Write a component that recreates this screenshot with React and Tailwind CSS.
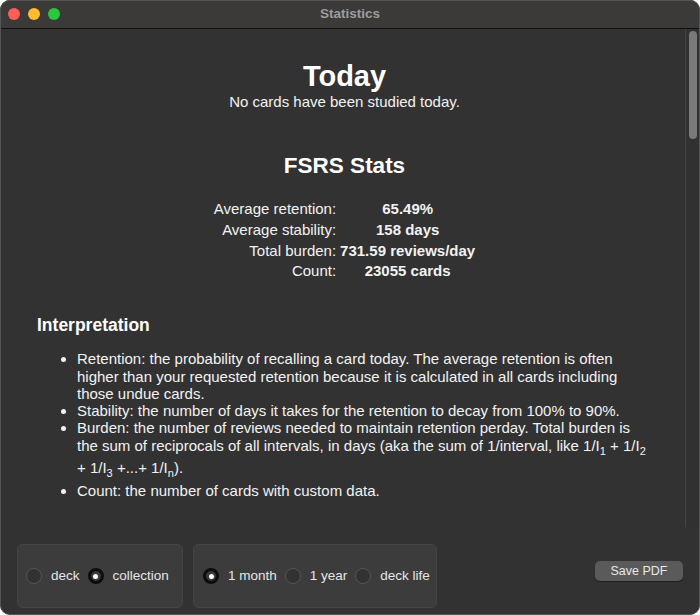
import React from 'react';

const FONT = { fontFamily: '"Liberation Sans", Arial, sans-serif' };

const STATS = [
  ['Average retention:', '65.49%'],
  ['Average stability:', '158 days'],
  ['Total burden:', '731.59 reviews/day'],
  ['Count:', '23055 cards'],
];

const subClass = 'static align-sub leading-normal text-[11px]';

const Radio = ({ label, checked }) => (
  <label className="flex items-center gap-[9px]">
    {checked ? (
      <span className="w-[16px] h-[16px] rounded-full border-[3px] border-[#0c0c0c] bg-[#3a3a3a] flex items-center justify-center">
        <span className="w-[5px] h-[5px] rounded-full bg-white" />
      </span>
    ) : (
      <span className="w-[16px] h-[16px] rounded-full border border-[#555555] bg-[#323232]" />
    )}
    <span className="text-[13.5px] text-[#e6e6e6]">{label}</span>
  </label>
);

const App = () => {
  return (
    <div className="w-[700px] h-[615px] bg-white" style={FONT}>
      <div className="relative w-full h-full rounded-[10px] overflow-hidden bg-[#323232] flex flex-col">
        {/* title bar */}
        <div className="h-[29px] bg-[#3b3a38] border-b border-[#101010] grid grid-cols-[1fr_auto_1fr] items-center shrink-0">
          <div className="flex items-center gap-[8px] pl-[8px]">
            <span className="w-[12px] h-[12px] rounded-full bg-[#ff5f57]" />
            <span className="w-[12px] h-[12px] rounded-full bg-[#febc2e]" />
            <span className="w-[12px] h-[12px] rounded-full bg-[#28c840]" />
          </div>
          <div className="text-[13.5px] font-bold text-[#9e9d9b]">Statistics</div>
          <div />
        </div>

        {/* web view */}
        <div className="h-[498px] flex shrink-0">
          <div className="flex-1 pl-[37px] pr-[33px] pt-[31px] text-[15px] text-[#f2f2f2]">
            <h1 className="text-[29px] font-bold text-center text-white leading-[1.149]">
              Today
            </h1>
            <p className="text-center leading-[1.149]">
              No cards have been studied today.
            </p>

            <h2 className="mt-[42px] text-[22.5px] font-bold text-center text-white leading-[1.149]">
              FSRS Stats
            </h2>
            <table className="mx-auto mt-[20px]">
              <tbody>
                {STATS.map(([label, value]) => (
                  <tr key={label}>
                    <td className="px-[2px] py-[1.75px] text-right leading-[1.149]">
                      {label}
                    </td>
                    <td className="px-[2px] py-[1.75px] text-center font-bold leading-[1.149]">
                      {value}
                    </td>
                  </tr>
                ))}
              </tbody>
            </table>

            <h3 className="mt-[34px] text-[17.5px] font-bold text-white leading-[1.149]">
              Interpretation
            </h3>
            <ul className="mt-[15px] pl-[40px] list-disc leading-[1.149]">
              <li>
                Retention: the probability of recalling a card today. The
                average retention is often higher than your requested retention
                because it is calculated in all cards including those undue
                cards.
              </li>
              <li>
                Stability: the number of days it takes for the retention to
                decay from 100% to 90%.
              </li>
              <li>
                <span>
                  Burden: the number of reviews needed to maintain retention
                  perday. Total burden is
                </span>{' '}
                <span>the sum of reciprocals of all intervals,</span>{' '}
                <span>in days (aka the sum of 1/interval, like</span>{' '}
                <span>
                  1/I<sub className={subClass}>1</sub>
                </span>{' '}
                <span>
                  + 1/I<sub className={subClass}>2</sub>
                </span>{' '}
                <span>
                  + 1/I<sub className={subClass}>3</sub>
                </span>{' '}
                <span>
                  +...+ 1/I<sub className={subClass}>n</sub>).
                </span>
              </li>
              <li>Count: the number of cards with custom data.</li>
            </ul>
          </div>

          {/* scrollbar */}
          <div className="w-[15px] border-l border-[#454545] bg-[#313131] pt-[2px] pl-[3px]">
            <div className="w-[8px] h-[108px] rounded-full bg-[#7a7a7a]" />
          </div>
        </div>

        {/* bottom bar */}
        <div className="flex-1 flex items-start pl-[17px] pr-[17px] pt-[17px]">
          <div className="w-[166px] h-[64px] rounded-[5px] bg-[#3c3c3c] border border-[#444444] flex items-center gap-[8px] pl-[8px]">
            <Radio label="deck" />
            <Radio label="collection" checked />
          </div>
          <div className="ml-[10px] w-[244px] h-[64px] rounded-[5px] bg-[#3c3c3c] border border-[#444444] flex items-center gap-[8px] pl-[9px]">
            <Radio label="1 month" checked />
            <Radio label="1 year" />
            <Radio label="deck life" />
          </div>
          <div className="flex-1" />
          <button className="mt-[17px] w-[88px] h-[20px] rounded-[5px] bg-[#5a5a5a] shadow-[0_1px_1px_rgba(0,0,0,0.4)] text-[12.5px] text-[#e8e8e8] leading-none">
            Save PDF
          </button>
        </div>

        <div className="absolute inset-0 rounded-[10px] border border-[#555555] pointer-events-none" />
      </div>
    </div>
  );
};

export default App;
